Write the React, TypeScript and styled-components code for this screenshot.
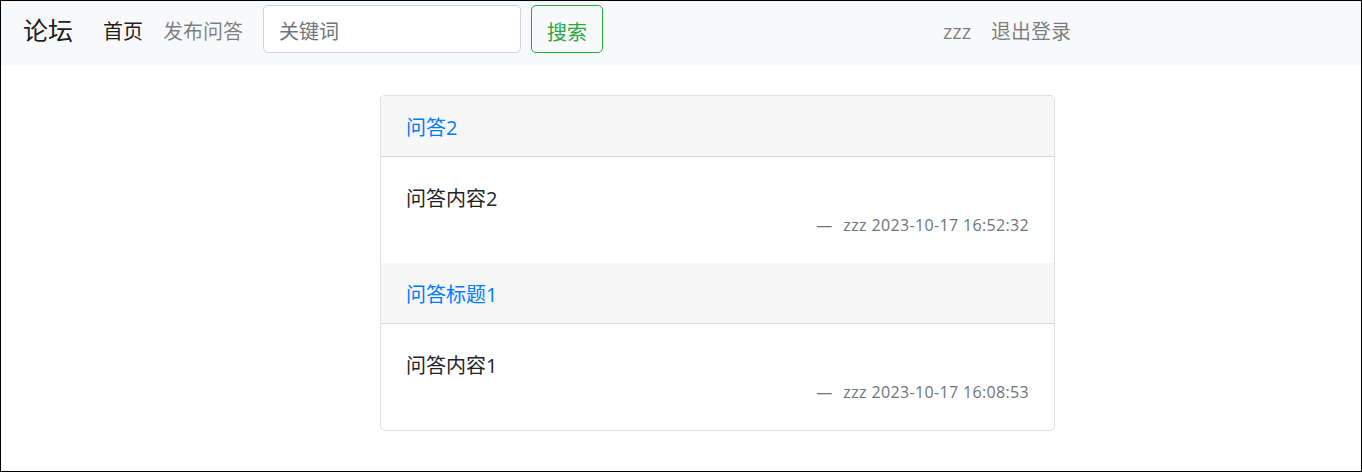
import styled, { createGlobalStyle } from "styled-components";

const GlobalStyle = createGlobalStyle`
  html, body {
    margin: 0;
    padding: 0;
    background: #fff;
  }
  * {
    box-sizing: border-box;
  }
  body {
    font-family: "Open Sans", "Noto Sans CJK SC", sans-serif;
    color: #212529;
  }
`;

const Frame = styled.div`
  width: 1362px;
  height: 472px;
  border: 1px solid #000;
  overflow: hidden;
`;

const Navbar = styled.nav`
  display: flex;
  align-items: center;
  height: 64px;
  padding: 4px 20px 12px 20px;
  background: #f8f9fa;
`;

const Brand = styled.a`
  font-size: 25px;
  line-height: 1.5;
  padding: 3px 0 0 2px;
  margin-right: 20px;
  color: rgba(0, 0, 0, 0.9);
  text-decoration: none;
`;

const NavLink = styled.a<{ $active?: boolean }>`
  font-size: 20px;
  line-height: 1.5;
  padding: 13px 10px 7px 10px;
  color: ${(p) => (p.$active ? "rgba(0, 0, 0, 0.9)" : "rgba(0, 0, 0, 0.5)")};
  text-decoration: none;
`;

const SearchForm = styled.form`
  display: flex;
  align-items: center;
  margin-left: 10px;
  gap: 10px;
`;

const SearchInput = styled.input`
  width: 258px;
  height: 48px;
  padding: 4px 15px 0 15px;
  font-family: inherit;
  font-size: 20px;
  color: #495057;
  background: #fff;
  border: 1px solid #ced4da;
  border-radius: 5px;
  outline: none;
  &::placeholder {
    color: #6c757d;
  }
`;

const SearchButton = styled.button`
  height: 48px;
  padding: 4px 15px 0 15px;
  font-family: inherit;
  font-size: 20px;
  color: #28a745;
  background: transparent;
  border: 1px solid #28a745;
  border-radius: 5px;
`;

const UserNav = styled.div`
  display: flex;
  align-items: center;
  margin-left: auto;
  margin-right: 260px;
`;

const Main = styled.main`
  padding: 30px 0 0 379px;
`;

const Card = styled.div`
  width: 675px;
  border: 1px solid rgba(0, 0, 0, 0.125);
  border-radius: 5px;
  overflow: hidden;
`;

const CardHeader = styled.div`
  height: 61px;
  padding: 17px 25px 13px 25px;
  background: #f7f7f7;
  border-bottom: 1px solid rgba(0, 0, 0, 0.125);
`;

const Title = styled.a`
  font-size: 20px;
  line-height: 30px;
  color: #007bff;
  text-decoration: none;
`;

const CardBody = styled.div`
  height: 106px;
  padding: 27px 25px 0 25px;
`;

const Content = styled.p`
  margin: 0;
  font-size: 20px;
  line-height: 30px;
`;

const Meta = styled.footer`
  margin-top: -1px;
  text-align: right;
  font-size: 16px;
  line-height: 24px;
  letter-spacing: 0.35px;
  color: #6c757d;
  &::before {
    content: "\\2014";
    display: inline-block;
    width: 27px;
    text-align: left;
  }
`;

const questions = [
  { title: "问答2", content: "问答内容2", author: "zzz", time: "2023-10-17 16:52:32" },
  { title: "问答标题1", content: "问答内容1", author: "zzz", time: "2023-10-17 16:08:53" },
];

const App = () => {
  return (
    <Frame>
      <GlobalStyle />
      <Navbar>
        <Brand href="#">论坛</Brand>
        <NavLink href="#" $active>
          首页
        </NavLink>
        <NavLink href="#">发布问答</NavLink>
        <SearchForm onSubmit={(e) => e.preventDefault()}>
          <SearchInput type="text" placeholder="关键词" />
          <SearchButton>搜索</SearchButton>
        </SearchForm>
        <UserNav>
          <NavLink href="#">zzz</NavLink>
          <NavLink href="#">退出登录</NavLink>
        </UserNav>
      </Navbar>
      <Main>
        <Card>
          {questions.map((q) => (
            <div key={q.title}>
              <CardHeader>
                <Title href="#">{q.title}</Title>
              </CardHeader>
              <CardBody>
                <Content>{q.content}</Content>
                <Meta>
                  {q.author} {q.time}
                </Meta>
              </CardBody>
            </div>
          ))}
        </Card>
      </Main>
    </Frame>
  );
};

export default App;
